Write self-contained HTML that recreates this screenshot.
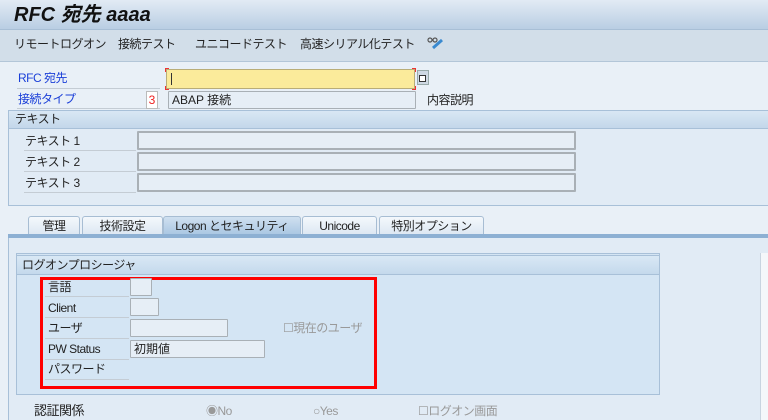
<!DOCTYPE html>
<html><head><meta charset="utf-8"><style>
*{margin:0;padding:0;box-sizing:border-box}
body{width:768px;height:420px;overflow:hidden;background:#e9f0f7;font-family:"Liberation Sans","Noto Sans CJK JP",sans-serif;font-size:12px;color:#222;position:relative}
.a{position:absolute;white-space:nowrap;line-height:1}
.t{font-size:12px;letter-spacing:-0.5px}
.f{position:absolute;border:1px solid #a9b0b6;background:#e6eef6;border-radius:1px}
.u{position:absolute;height:1px;background:#c4ccd4}
.tab{position:absolute;top:216px;height:19px;background:linear-gradient(#f4f8fc,#dce7f2);border:1px solid #a7bdd3;border-bottom:none;text-align:center;line-height:18px;font-size:12px;letter-spacing:-0.5px;border-radius:3px 3px 0 0}
</style></head><body>
<div class="a" style="left:0;top:0;width:768px;height:30px;background:linear-gradient(#e2ebf4,#b9cee3);border-bottom:1px solid #a8bfd6"></div>
<div class="a" style="left:14px;top:5px;font-size:20px;font-weight:bold;font-style:italic;color:#111">RFC 宛先 aaaa</div>
<div class="a" style="left:0;top:30px;width:768px;height:32px;background:#d2dee9;border-bottom:1px solid #b3c6d8"></div>
<div class="a t" style="left:14px;top:38px">リモートログオン</div>
<div class="a t" style="left:118px;top:38px">接続テスト</div>
<div class="a t" style="left:195px;top:38px">ユニコードテスト</div>
<div class="a t" style="left:300px;top:38px">高速シリアル化テスト</div>
<svg class="a" style="left:427px;top:36px" width="18" height="14"><circle cx="3" cy="4" r="2" fill="none" stroke="#555" stroke-width="1.2"/><circle cx="8" cy="4" r="2" fill="none" stroke="#555" stroke-width="1.2"/><path d="M6 12 L15 4" stroke="#3a8ad0" stroke-width="3"/></svg>

<div class="a t" style="left:18px;top:72px;color:#1b3fd8">RFC 宛先</div>
<div class="u" style="left:17px;top:88px;width:143px"></div>
<div class="a" style="left:166px;top:69px;width:249px;height:20px;background:#fbeb9b;border:1px solid #b9ad78"></div>
<div class="a" style="left:171px;top:73px;width:1px;height:12px;background:#333"></div>
<div class="a" style="left:165px;top:68px;width:4px;height:4px;border-left:1px solid #e33;border-top:1px solid #e33"></div>
<div class="a" style="left:412px;top:68px;width:4px;height:4px;border-right:1px solid #e33;border-top:1px solid #e33"></div>
<div class="a" style="left:165px;top:86px;width:4px;height:4px;border-left:1px solid #e33;border-bottom:1px solid #e33"></div>
<div class="a" style="left:412px;top:86px;width:4px;height:4px;border-right:1px solid #e33;border-bottom:1px solid #e33"></div>
<div class="a" style="left:417px;top:70px;width:12px;height:15px;background:#cfd9e4;border:1px solid #9aa"></div>
<div class="a" style="left:419px;top:75px;width:7px;height:7px;background:#fff;border:1px solid #333"></div>
<div class="a t" style="left:18px;top:93px;color:#1b3fd8">接続タイプ</div>
<div class="u" style="left:17px;top:108px;width:143px"></div>
<div class="a" style="left:146px;top:91px;width:12px;height:18px;background:#fff;border:1px solid #bbb;color:#e22;font-size:12px;text-align:center;line-height:16px">3</div>
<div class="f" style="left:168px;top:91px;width:248px;height:18px;padding-left:3px;line-height:16px;font-size:12px">ABAP 接続</div>
<div class="a t" style="left:427px;top:94px">内容説明</div>

<div class="a" style="left:8px;top:110px;width:760px;height:19px;background:linear-gradient(#d9e7f4,#c3d7ea);border:1px solid #a8c0d8;border-right:none"></div>
<div class="a t" style="left:15px;top:113px">テキスト</div>
<div class="a" style="left:8px;top:129px;width:760px;height:77px;background:#e1ebf5;border-left:1px solid #a8c0d8;border-bottom:1px solid #a8c0d8"></div>
<div class="a t" style="left:25px;top:135px">テキスト 1</div>
<div class="a t" style="left:25px;top:156px">テキスト 2</div>
<div class="a t" style="left:25px;top:177px">テキスト 3</div>
<div class="u" style="left:24px;top:150px;width:112px"></div>
<div class="u" style="left:24px;top:171px;width:112px"></div>
<div class="u" style="left:24px;top:192px;width:112px"></div>
<div class="f" style="left:137px;top:131px;width:439px;height:19px;border-width:2px"></div>
<div class="f" style="left:137px;top:152px;width:439px;height:19px;border-width:2px"></div>
<div class="f" style="left:137px;top:173px;width:439px;height:19px;border-width:2px"></div>

<div class="tab" style="left:28px;width:52px">管理</div>
<div class="tab" style="left:82px;width:81px">技術設定</div>
<div class="tab" style="left:163px;width:138px;background:linear-gradient(#cfe0f0,#a9c6e2)">Logon とセキュリティ</div>
<div class="tab" style="left:302px;width:75px">Unicode</div>
<div class="tab" style="left:379px;width:105px">特別オプション</div>
<div class="a" style="left:8px;top:234px;width:760px;height:4px;background:#8db0d3"></div>
<div class="a" style="left:8px;top:238px;width:760px;height:182px;background:#e1ebf5;border-left:1px solid #a8c0d8"></div>
<div class="a" style="left:16px;top:253px;width:644px;height:142px;background:#d4e5f4;border:1px solid #a8c0d8"></div>
<div class="a" style="left:16px;top:255px;width:644px;height:20px;background:linear-gradient(#d9e8f5,#c4d9ec);border:1px solid #a8c0d8"></div>
<div class="a t" style="left:22px;top:259px">ログオンプロシージャ</div>
<div class="a" style="left:40px;top:277px;width:337px;height:112px;border:3px solid #f00"></div>
<div class="a t" style="left:48px;top:281px">言語</div>
<div class="a t" style="left:48px;top:302px">Client</div>
<div class="a t" style="left:48px;top:322px">ユーザ</div>
<div class="a t" style="left:48px;top:343px">PW Status</div>
<div class="a t" style="left:48px;top:363px">パスワード</div>
<div class="u" style="left:45px;top:296px;width:84px"></div>
<div class="u" style="left:45px;top:317px;width:84px"></div>
<div class="u" style="left:45px;top:338px;width:84px"></div>
<div class="u" style="left:45px;top:359px;width:84px"></div>
<div class="u" style="left:45px;top:379px;width:84px"></div>
<div class="f" style="left:130px;top:278px;width:22px;height:18px"></div>
<div class="f" style="left:130px;top:298px;width:29px;height:18px"></div>
<div class="f" style="left:130px;top:319px;width:98px;height:18px"></div>
<div class="f" style="left:130px;top:340px;width:135px;height:18px;padding-left:3px;line-height:16px;font-size:12px">初期値</div>
<div class="a t" style="left:283px;top:322px;color:#999">☐現在のユーザ</div>
<div class="a t" style="left:34px;top:404px;font-size:13px">認証関係</div>
<div class="a t" style="left:206px;top:405px;color:#999">◉No</div>
<div class="a t" style="left:313px;top:405px;color:#999">○Yes</div>
<div class="a t" style="left:418px;top:405px;color:#999">☐ログオン画面</div>
<div class="a" style="left:760px;top:253px;width:8px;height:167px;background:#f4f7fa;border-left:1px solid #c8d4e0"></div>
</body></html>
